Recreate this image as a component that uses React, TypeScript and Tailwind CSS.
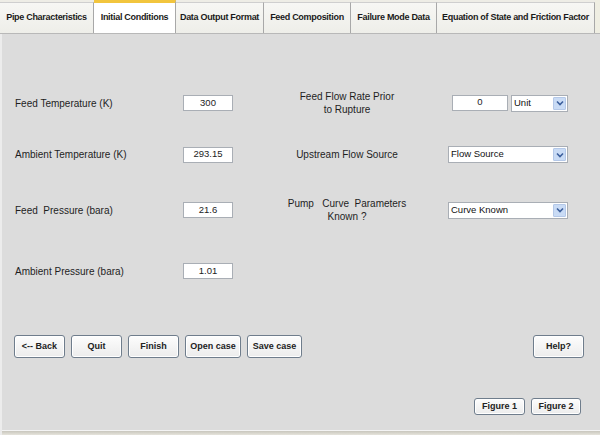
import React from 'react';

const tabs = [
  { label: 'Pipe Characteristics', w: 'w-[94px]' },
  { label: 'Initial Conditions', w: 'w-[82px]', active: true },
  { label: 'Data Output Format', w: 'w-[88px]' },
  { label: 'Feed Composition', w: 'w-[87px]' },
  { label: 'Failure  Mode Data', w: 'w-[86px]' },
  { label: 'Equation of State and Friction Factor', w: 'w-[158px]' },
];

const Field = ({ value, w }: { value: string; w: string }) => (
  <div className={`${w} h-[16px] shrink-0 bg-white border border-[#a9aeb5] flex items-center justify-center text-[9.5px] text-[#222]`}>
    {value}
  </div>
);

const Select = ({ value, w }: { value: string; w: string }) => (
  <div className={`${w} h-[17px] shrink-0 bg-white border border-[#a9aeb5] flex items-center pl-[2px] pr-[1px] text-[9.5px] text-[#111]`}>
    <span className="flex-1">{value}</span>
    <div className="w-[13px] h-[13px] bg-[#c9dbf5] border border-[#b4c8e8] flex items-center justify-center rounded-[1px]">
      <svg width="8" height="6" viewBox="0 0 8 6">
        <path d="M1 1.5 L4 4.5 L7 1.5" fill="none" stroke="#3c5f9c" strokeWidth="1.6" />
      </svg>
    </div>
  </div>
);

const Btn = ({ label, w, h = 'h-[23px]' }: { label: string; w: string; h?: string }) => (
  <div className={`${w} ${h} shrink-0 rounded-[3px] border border-[#6f7d8c] bg-gradient-to-b from-[#fdfdfd] to-[#ececec] flex items-center justify-center text-[9px] font-bold text-[#222] shadow-[inset_0_0_0_1px_#ffffff]`}>
    {label}
  </div>
);

export default function App() {
  return (
    <div className="w-[600px] h-[435px] bg-[#dcdcdc] flex flex-col overflow-hidden" style={{ fontFamily: '"Liberation Sans", Arial, sans-serif' }}>
      {/* tab strip */}
      <div className="h-[34px] shrink-0 flex items-end bg-[#eeede6] border-b border-[#b8b8b8]">
        {tabs.map((t) => (
          <div
            key={t.label}
            className={`${t.w} flex items-center justify-center border-r border-[#a8a8a8] text-[9px] font-bold tracking-[-0.3px] text-[#1a1a1a] ${
              t.active ? 'h-[33px] bg-white border-t-[3px] border-t-[#f2c53d]' : 'h-[31px] bg-gradient-to-b from-[#f7f7f4] to-[#eeeee9] border-t border-t-[#cfcfcf]'
            }`}
          >
            {t.label}
          </div>
        ))}
        <div className="flex-1 h-full bg-[#efeee2]" />
      </div>

      {/* form */}
      <div className="flex-1 flex flex-col border-l-2 border-[#ececec] text-[10px] text-[#1e1e1e]">
        <div className="mt-[56px] h-[26px] shrink-0 flex items-center">
          <div className="w-[181px] pl-[13px]">Feed Temperature (K)</div>
          <Field value="300" w="w-[50px]" />
          <div className="w-[49px]" />
          <div className="w-[130px] text-center leading-[13px] whitespace-nowrap">
            Feed Flow Rate Prior
            <br />
            to Rupture
          </div>
          <div className="ml-[40px] flex gap-[3px]">
            <Field value="0" w="w-[56px]" />
            <Select value="Unit" w="w-[57px]" />
          </div>
        </div>

        <div className="mt-[30px] h-[17px] shrink-0 flex items-center">
          <div className="w-[181px] pl-[13px]">Ambient Temperature (K)</div>
          <Field value="293.15" w="w-[50px]" />
          <div className="w-[49px]" />
          <div className="w-[130px] text-center">Upstream Flow Source</div>
          <div className="ml-[36px]">
            <Select value="Flow Source" w="w-[120px]" />
          </div>
        </div>

        <div className="mt-[34px] h-[26px] shrink-0 flex items-center">
          <div className="w-[181px] pl-[13px]">Feed&nbsp; Pressure (bara)</div>
          <Field value="21.6" w="w-[50px]" />
          <div className="w-[49px]" />
          <div className="w-[130px] text-center leading-[13px] whitespace-nowrap">
            Pump&nbsp;&nbsp; Curve&nbsp; Parameters
            <br />
            Known ?
          </div>
          <div className="ml-[36px]">
            <Select value="Curve Known" w="w-[120px]" />
          </div>
        </div>

        <div className="mt-[40px] h-[16px] shrink-0 flex items-center">
          <div className="w-[181px] pl-[13px]">Ambient Pressure (bara)</div>
          <Field value="1.01" w="w-[50px]" />
        </div>

        <div className="mt-[56px] shrink-0 flex items-center pl-[12px] pr-[16px]">
          <div className="flex gap-[6px]">
            <Btn label="<-- Back" w="w-[51px]" />
            <Btn label="Quit" w="w-[51px]" />
            <Btn label="Finish" w="w-[51px]" />
            <Btn label="Open case" w="w-[56px]" />
            <Btn label="Save case" w="w-[55px]" />
          </div>
          <div className="ml-auto">
            <Btn label="Help?" w="w-[51px]" />
          </div>
        </div>

        <div className="mt-[40px] shrink-0 flex justify-end gap-[6px] pr-[19px]">
          <Btn label="Figure 1" w="w-[51px]" h="h-[17px]" />
          <Btn label="Figure 2" w="w-[50px]" h="h-[17px]" />
        </div>

        <div className="mt-auto h-[5px] shrink-0 border-t border-[#f4f4f4] bg-gradient-to-b from-[#c8c6bd] to-[#e6e4dc]" />
      </div>
    </div>
  );
}
